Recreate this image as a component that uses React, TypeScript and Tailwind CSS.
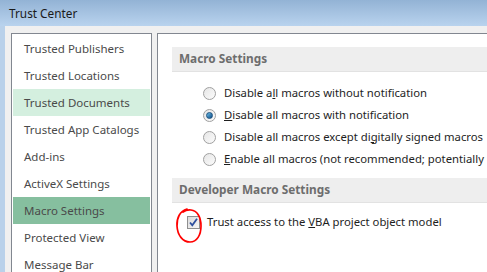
import React from 'react';

const font = { fontFamily: '"Noto Sans", "Open Sans", sans-serif' };

const navItems = [
  'Trusted Publishers',
  'Trusted Locations',
  'Trusted Documents',
  'Trusted App Catalogs',
  'Add-ins',
  'ActiveX Settings',
  'Macro Settings',
  'Protected View',
  'Message Bar',
];

function Radio({ checked }: { checked?: boolean }) {
  return (
    <span className="w-[13px] h-[13px] rounded-full border border-[#a0a0a0] bg-gradient-to-br from-[#e6e6e6] to-[#fbfbfb] flex items-center justify-center shrink-0">
      {checked && (
        <span className="w-[7px] h-[7px] rounded-full bg-gradient-to-br from-[#6ec0ea] to-[#0b4d86] border border-[#1a4f7e]" />
      )}
    </span>
  );
}

function SectionHeader({ children }: { children: React.ReactNode }) {
  return (
    <div className="h-[25px] bg-[#eeeeee] border-b border-[#e2e2e2] flex items-center pl-[7px] text-[11.8px] font-bold text-[#6d6d6d]">
      {children}
    </div>
  );
}

function Option({ checked, children }: { checked?: boolean; children: React.ReactNode }) {
  return (
    <div className="h-[22px] flex items-center gap-[8px] text-[11.3px] text-[#1e1e1e] whitespace-nowrap">
      <Radio checked={checked} />
      <span>{children}</span>
    </div>
  );
}

export default function App() {
  return (
    <div className="w-[487px] h-[272px] overflow-hidden flex flex-col bg-[#f0f0f0]" style={font}>
      <div className="h-[26px] shrink-0 bg-gradient-to-b from-[#93b3d5] to-[#b9d3ee] flex items-center pl-[9px] pt-[2px] text-[11.8px] text-[#1a1a1a]">
        Trust Center
      </div>
      <div className="flex-1 flex border-l-[5px] border-[#b9d1ea] pt-[7px] pl-[6px]">
        <div className="w-[141px] shrink-0 bg-white border-l border-t border-r border-[#828790] pt-[1px] px-[1px]">
          {navItems.map((item) => (
            <div
              key={item}
              className={
                'h-[27px] flex items-center pl-[11px] pt-[1px] text-[11.5px] text-[#4a4a4a] ' +
                (item === 'Trusted Documents'
                  ? 'bg-[#d4efdf]'
                  : item === 'Macro Settings'
                  ? 'bg-[#86bf9f]'
                  : '')
              }
            >
              {item}
            </div>
          ))}
        </div>
        <div className="flex-1 ml-[5px] bg-white border-l border-t border-[#828790] pt-[13px] pl-[14px] relative overflow-hidden">
          <SectionHeader>Macro Settings</SectionHeader>
          <div className="pl-[31px] pt-[10px] pb-[8px]">
            <Option>
              Disable a<u>l</u>l macros without notification
            </Option>
            <Option checked>
              <u>D</u>isable all macros with notification
            </Option>
            <Option>
              Disable all macros except di<u>g</u>itally signed macros
            </Option>
            <Option>
              <u>E</u>nable all macros (not recommended; potentially dangerous code can run)
            </Option>
          </div>
          <SectionHeader>Developer Macro Settings</SectionHeader>
          <div className="pl-[15px] pt-[11px] flex items-center gap-[7px] text-[11.3px] text-[#1e1e1e] whitespace-nowrap">
            <span className="w-[13px] h-[13px] border border-[#8f8f8f] bg-gradient-to-br from-[#dcdcdc] to-[#f6f6f6] flex items-center justify-center shrink-0">
              <svg width="11" height="11" viewBox="0 0 11 11">
                <path d="M2 5.5 L4.3 8.3 L9 1.8" fill="none" stroke="#2d4f9e" strokeWidth="1.8" />
              </svg>
            </span>
            <span>
              Trust access to the <u>V</u>BA project object model
            </span>
          </div>
          <svg
            className="absolute left-[17px] top-[173px]"
            width="32"
            height="38"
            viewBox="0 0 32 38"
          >
            <path
              d="M12 2 C5 4 1.5 11 2 19 C2.5 28 7.5 35 15 35 C22 35 26 28 26 19 C26 10 22 3.5 16 3 C13 2.7 10 3.5 8 5"
              fill="none"
              stroke="#ff0000"
              strokeWidth="1.7"
              strokeLinecap="round"
            />
          </svg>
        </div>
      </div>
    </div>
  );
}
